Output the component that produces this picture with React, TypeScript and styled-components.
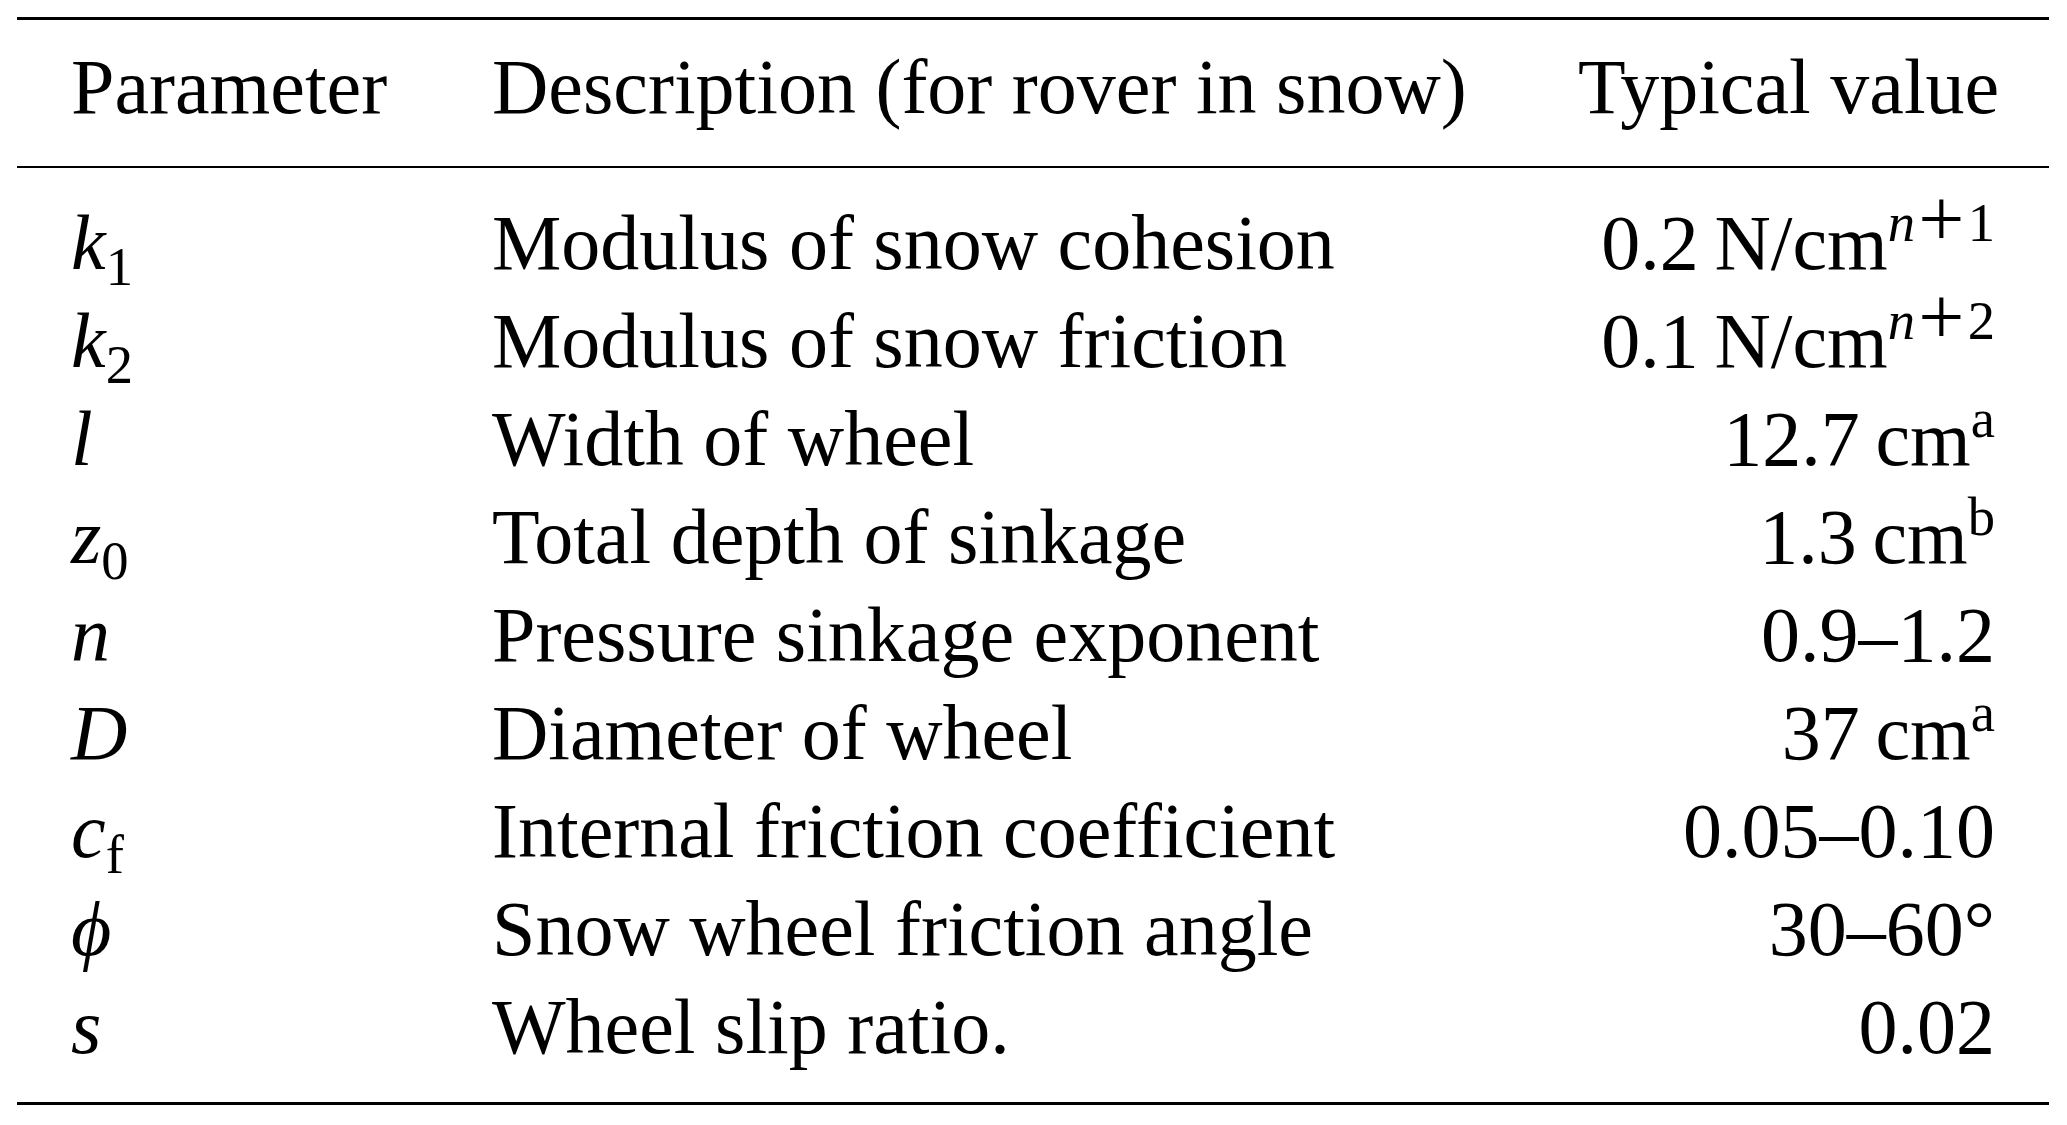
import React from "react";
import styled, { createGlobalStyle } from "styled-components";

const GlobalStyle = createGlobalStyle`
  html,
  body {
    margin: 0;
    background: #fff;
  }

  body {
    font-family: "Liberation Serif", "Times New Roman", "DejaVu Serif", serif;
    color: #000;
  }
`;

type Align = "left" | "right";

const Page = styled.main`
  width: 2067px;
  height: 1125px;
  box-sizing: border-box;
  padding: 17px 0 0 17px;
  background: #fff;
`;

const Table = styled.table`
  width: 2032px;
  table-layout: fixed;
  border-collapse: separate;
  border-spacing: 0;
  font-size: 78px;
  line-height: 98px;
`;

const HeadCell = styled.th<{ $width: number; $align?: Align }>`
  box-sizing: border-box;
  width: ${(p) => p.$width}px;
  padding: 18px 54px 30px;
  border-top: 3px solid #000;
  border-bottom: 2px solid #000;
  font-weight: normal;
  text-align: ${(p) => p.$align ?? "left"};
  white-space: nowrap;
`;

const Row = styled.tr`
  &:first-child > td {
    padding-top: 26px;
  }

  &:last-child > td {
    padding-bottom: 26px;
    border-bottom: 3px solid #000;
  }
`;

const Cell = styled.td<{ $align?: Align }>`
  padding: 0 54px;
  text-align: ${(p) => p.$align ?? "left"};
  white-space: nowrap;
`;

const Symbol = styled.span`
  font-style: italic;
`;

const Var = styled.span`
  font-style: italic;
`;

const Sub = styled.sub`
  font-size: 0.7em;
  font-style: normal;
  line-height: 0;
  vertical-align: -0.3em;
`;

// superscript for math exponents and table notes alike
const Sup = styled.sup`
  font-size: 0.7em;
  line-height: 0;
  vertical-align: 0.52em;
`;

// the math plus is drawn larger than the text one
const Op = styled.span`
  font-size: 1.5em;
  line-height: 0;
  margin: 0 0.04em;
  vertical-align: -0.07em;
`;

const rows: { sym: React.ReactNode; desc: string; value: React.ReactNode }[] = [
  {
    sym: (
      <>
        k<Sub>1</Sub>
      </>
    ),
    desc: "Modulus of snow cohesion",
    value: (
      <>
        0.2{"\u2009"}N/cm
        <Sup>
          <Var>n</Var>
          <Op>+</Op>1
        </Sup>
      </>
    ),
  },
  {
    sym: (
      <>
        k<Sub>2</Sub>
      </>
    ),
    desc: "Modulus of snow friction",
    value: (
      <>
        0.1{"\u2009"}N/cm
        <Sup>
          <Var>n</Var>
          <Op>+</Op>2
        </Sup>
      </>
    ),
  },
  {
    sym: "l",
    desc: "Width of wheel",
    value: (
      <>
        12.7{"\u2009"}cm<Sup>a</Sup>
      </>
    ),
  },
  {
    sym: (
      <>
        z<Sub>0</Sub>
      </>
    ),
    desc: "Total depth of sinkage",
    value: (
      <>
        1.3{"\u2009"}cm<Sup>b</Sup>
      </>
    ),
  },
  { sym: "n", desc: "Pressure sinkage exponent", value: "0.9–1.2" },
  {
    sym: "D",
    desc: "Diameter of wheel",
    value: (
      <>
        37{"\u2009"}cm<Sup>a</Sup>
      </>
    ),
  },
  {
    sym: (
      <>
        c<Sub>f</Sub>
      </>
    ),
    desc: "Internal friction coefficient",
    value: "0.05–0.10",
  },
  { sym: "\u03d5", desc: "Snow wheel friction angle", value: "30–60°" },
  { sym: "s", desc: "Wheel slip ratio.", value: "0.02" },
];

const App = () => (
  <Page>
    <GlobalStyle />
    <Table>
      <thead>
        <tr>
          <HeadCell $width={421}>Parameter</HeadCell>
          <HeadCell $width={1086}>Description (for rover in snow)</HeadCell>
          <HeadCell $width={525} $align="right">
            Typical value
          </HeadCell>
        </tr>
      </thead>
      <tbody>
        {rows.map((row) => (
          <Row key={row.desc}>
            <Cell>
              <Symbol>{row.sym}</Symbol>
            </Cell>
            <Cell>{row.desc}</Cell>
            <Cell $align="right">{row.value}</Cell>
          </Row>
        ))}
      </tbody>
    </Table>
  </Page>
);

export default App;
